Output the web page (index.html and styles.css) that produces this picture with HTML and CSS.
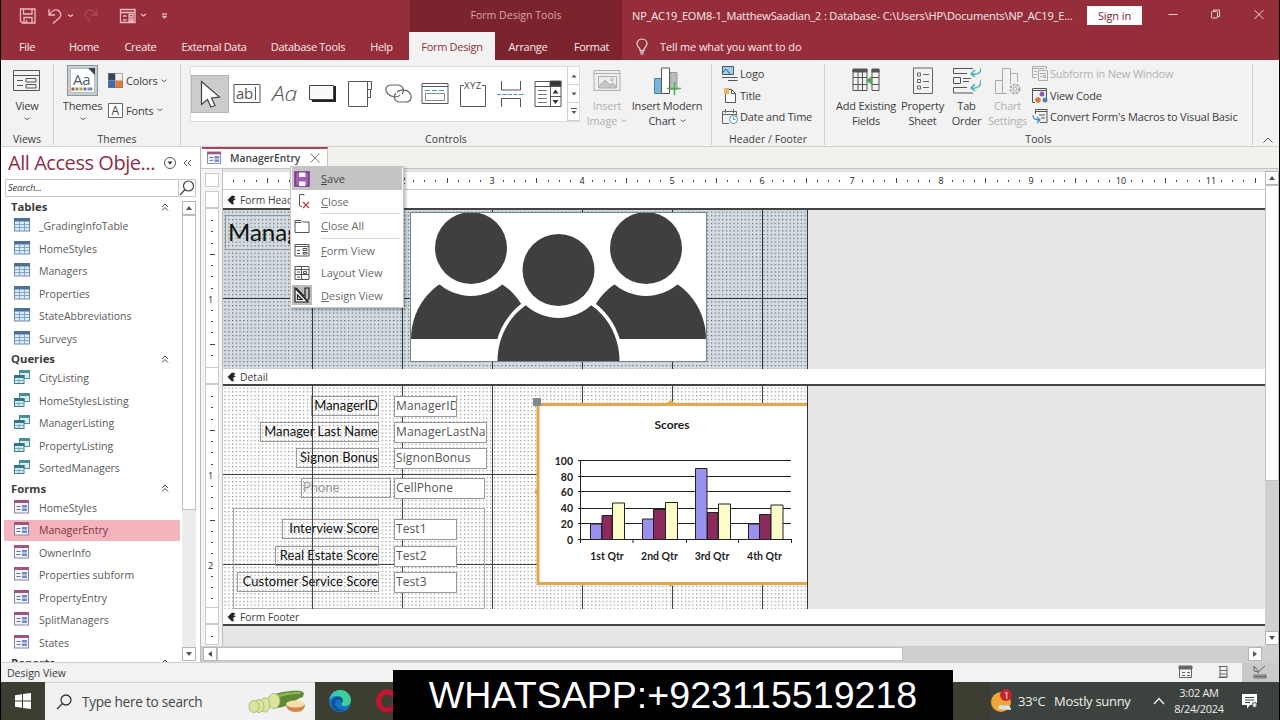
FILE: index.html
```html
<!DOCTYPE html>
<html lang="en">
<head>
  <meta charset="UTF-8">
  <meta name="viewport" content="width=device-width, initial-scale=1.0">
  <title>NP_AC19_EOM8-1_MatthewSaadian_2 : Database</title>
  <link rel="stylesheet" href="styles.css">
</head>
<body>
  <!-- shared icons -->
  <svg class="defs" width="0" height="0">
    <symbol id="i-table" viewBox="0 0 16 14">
      <rect x="0.5" y="0.5" width="15" height="12.500" fill="#dcebf8" stroke="#6c8ba8"/>
      <rect x="0" y="0" width="16" height="3.500" fill="#4d7096"/>
      <path d="M5.500 3v10M10.500 3v10M1 6.500h14M1 9.500h14" stroke="#7ea6cf" fill="none"/>
    </symbol>
    <symbol id="i-query" viewBox="0 0 16 14">
      <rect x="5.500" y="0.500" width="10" height="8" fill="#d5eeec" stroke="#4c8f92"/>
      <rect x="5" y="0" width="11" height="3" fill="#4c8f92"/>
      <rect x="0.500" y="5.500" width="9.500" height="8" fill="#d3ebf0" stroke="#3e7c8c"/>
      <rect x="0" y="5" width="10.500" height="3" fill="#357482"/>
      <path d="M5 9v4M1 10.500h8" stroke="#76aeb8"/>
    </symbol>
    <symbol id="i-form" viewBox="0 0 16 14">
      <rect x="0.500" y="0.500" width="14" height="12.500" fill="#f3f5fc" stroke="#7e86ab"/>
      <rect x="0" y="0" width="15" height="3" fill="#a0567c"/>
      <path d="M2.500 6.500h4M2.500 9.500h4" stroke="#5b6aa8"/>
      <rect x="8" y="5" width="5" height="2.500" fill="#7287c9"/>
      <rect x="8" y="8.500" width="5" height="2.500" fill="#7287c9"/>
    </symbol>
    <symbol id="i-collapse" viewBox="0 0 8 8">
      <path d="M1 4l3-3 3 3M1 7.500l3-3 3 3" fill="none" stroke="#444"/>
    </symbol>
    <symbol id="i-section" viewBox="0 0 10 10">
      <path d="M0.500 5L5 0.500 8.500 1.500 6.500 3.500 9 4 6 6 7 9.500 4.500 9z" fill="#222"/>
    </symbol>
    <symbol id="i-chev" viewBox="0 0 6 4">
      <path d="M0.500 0.700l2.500 2 2.500-2" fill="none" stroke="currentColor"/>
    </symbol>
  </svg>

  <div class="titlebar">
    <div class="quick">
      <svg width="170" height="32" viewBox="0 0 170 32" fill="none" stroke="#f0bcc2" stroke-width="1.300">
        <path d="M20.500 9h14.500v14h-12.500l-2-2zM23.500 9v5h8.500V9M24 23v-5.500h8V23M26.500 20v3"/>
        <path d="M49 9v6h6M49 15c4-6 8-6 10-4 3 3 2 6-1 8l-5 4.500"/>
        <path d="M68 14.500l2.500 2 2.500-2" />
        <path d="M97 9v6h-6M97 15c-4-6-8-6-10-4-3 3-2 6 1 8l3 3" stroke="#a94a56"/>
        <path d="M120.500 9.500h14.500v13h-14.500zM120.500 12.500h14.500M123 16h3.500M123 20h3.500M129 14.500h4v2.500h-4zM129 19h4v2h-4z"/>
        <path d="M141 14l2.500 2 2.500-2"/>
        <path d="M162 14h5"/><path d="M162 16h5l-2.500 2.500z" fill="#f0bcc2" stroke-width="0.500"/>
      </svg>
    </div>
    <div class="context-title">Form Design Tools</div>
    <div class="doc-title">NP_AC19_EOM8-1_MatthewSaadian_2 : Database- C:\Users\HP\Documents\NP_AC19_E...</div>
    <button class="signin">Sign in</button>
    <svg class="winbtns" width="130" height="32" viewBox="0 0 130 32" fill="none" stroke="#f3d5d8">
      <path d="M26.500 14.500h9"/>
      <rect x="69.500" y="11.500" width="6" height="6.500" rx="1"/><path d="M71.500 11.500v-1.500h6v6.500h-1.500"/>
      <path d="M112.500 10l9 9M121.500 10l-9 9"/>
    </svg>
  </div>

  <div class="tabs">
    <span class="tab t-file">File</span>
    <span class="tab t-home">Home</span>
    <span class="tab t-create">Create</span>
    <span class="tab t-ext">External Data</span>
    <span class="tab t-db">Database Tools</span>
    <span class="tab t-help">Help</span>
    <span class="tab t-design active">Form Design</span>
    <span class="tab t-arrange dark">Arrange</span>
    <span class="tab t-format dark">Format</span>
    <span class="tell">
      <svg width="12" height="17" viewBox="0 0 12 17" fill="none" stroke="#f6dfe1" stroke-width="1.200">
        <path d="M4 12.500V11C2.500 9.500 1 8 1 5.800 1 3 3.200 1 6 1s5 2 5 4.800C11 8 9.500 9.500 8 11v1.500zM4 14.200h4M4.500 16h3"/>
      </svg>
      <span>Tell me what you want to do</span>
    </span>
  </div>

  <div class="ribbon">
    <div class="group g-views">
      <div class="group-body">
        <div class="big">
          <svg width="28" height="28" viewBox="0 0 28 28" fill="none" stroke="#555">
            <path d="M0.500 3.500h26v20H0.500zM0.500 8.500h26"/><path d="M4 13.500h6M4 18.500h6M13 11.500h10v3.500H13zM13 17.500h10v3.500H13z"/>
          </svg>
          <span>View</span>
          <svg class="chev" width="6" height="4"><use href="#i-chev"/></svg>
        </div>
      </div>
      <div class="group-name">Views</div>
    </div>

    <div class="group g-themes">
      <div class="group-body">
        <div class="big">
          <svg width="31" height="31" viewBox="0 0 31 31">
            <rect x="0.500" y="0.500" width="30" height="30" fill="#c3cfd2" stroke="#8a9698"/>
            <path d="M3.500 3.500h18l6 6v18h-24z" fill="#fff" stroke="#b5bdbf"/>
            <path d="M21 3h7v7z" fill="#3c4650"/>
            <path d="M4.500 24h3" stroke="#b4553c" stroke-width="3"/><path d="M8.500 24h3" stroke="#68a06a" stroke-width="3"/><path d="M12.500 24h3" stroke="#cf9a3a" stroke-width="3"/><path d="M16.500 24h3" stroke="#4c7eae" stroke-width="3"/><path d="M20.500 24h5" stroke="#7f94a1" stroke-width="3"/>
            <text x="6" y="20" font-size="15" fill="#52616b">Aa</text>
          </svg>
          <span>Themes</span>
          <svg class="chev" width="6" height="4"><use href="#i-chev"/></svg>
        </div>
        <div class="small-list themes-list">
          <div class="small">
            <svg width="15" height="15" viewBox="0 0 15 15"><path d="M0 0h7.500v7.500H0z" fill="#39475a"/><path d="M7.500 0H15v7.500H7.500z" fill="#f5efe9"/><path d="M0 7.500h7.500V15H0z" fill="#3f6cb0"/><path d="M7.500 7.500H15V15H7.500z" fill="#dc7f3d"/><path d="M0.500 0.500h14v14h-14z" fill="none" stroke="#777" stroke-width="0.600"/></svg>
            <span>Colors</span>
            <svg class="chev" width="6" height="4"><use href="#i-chev"/></svg>
          </div>
          <div class="small">
            <svg width="15" height="15" viewBox="0 0 15 15"><path d="M0.500 0.500h14v14h-14z" fill="#fff" stroke="#666"/><text x="3.500" y="12" font-size="12" fill="#444">A</text></svg>
            <span>Fonts</span>
            <svg class="chev" width="6" height="4"><use href="#i-chev"/></svg>
          </div>
        </div>
      </div>
      <div class="group-name">Themes</div>
    </div>

    <div class="group g-controls">
      <div class="group-body">
        <div class="gallery">
          <div class="cell selected">
            <svg width="28" height="28" viewBox="0 0 28 28"><path d="M5.500 1.500v23l6-5 3.500 7.500 4-1.500-3.500-7.500 8-1z" fill="#fff" stroke="#444" stroke-width="1.200"/></svg>
          </div>
          <div class="cell">
            <svg width="28" height="28" viewBox="0 0 28 28"><path d="M1 4.500h26v18H1z" fill="#fff" stroke="#555"/><path d="M22.500 7v13" stroke="#555"/><text x="3" y="19" font-size="15" textLength="17" fill="#555">ab</text></svg>
          </div>
          <div class="cell">
            <svg width="28" height="28" viewBox="0 0 28 28"><text x="1" y="21" font-size="20" textLength="25" lengthAdjust="spacingAndGlyphs" font-style="italic" font-weight="300" fill="#555">Aa</text></svg>
          </div>
          <div class="cell">
            <svg width="28" height="28" viewBox="0 0 28 28"><path d="M1 6h26v16H3z" fill="#222"/><path d="M0.500 5.500h24v14h-24z" fill="#fafafa" stroke="#444"/></svg>
          </div>
          <div class="cell">
            <svg width="28" height="28" viewBox="0 0 28 28" fill="none" stroke="#555"><path d="M2.500 1.500h19v25h-19z"/><path d="M21.500 1.500h4v8h-4M21.500 9.500h3v8h-3"/></svg>
          </div>
          <div class="cell">
            <svg width="28" height="28" viewBox="0 0 28 28" fill="none" stroke="#666" stroke-width="1.200"><path d="M16 15c-2 3-9 2-12-1-4-4-2-9 3-9h6c6 0 8 5 5 9"/><path d="M13 12c3-3 10-2 12 0 4 4 2 10-3 10h-6c-6 0-7-6-4-9"/></svg>
          </div>
          <div class="cell">
            <svg width="28" height="28" viewBox="0 0 28 28" fill="none" stroke="#555"><path d="M1 3.500h26v20H1zM1 6.500h26"/><path d="M4 10.500h20" stroke="#3f9ab8" stroke-dasharray="5 2"/><path d="M4.500 13.500h19v7h-19z" stroke="#888"/></svg>
          </div>
          <div class="cell">
            <svg width="28" height="28" viewBox="0 0 28 28" fill="none"><path d="M5 5.500H1.500v21h25v-21H23" stroke="#555"/><text x="5" y="9" font-size="9.500" textLength="17" fill="#444">XYZ</text></svg>
          </div>
          <div class="cell">
            <svg width="28" height="28" viewBox="0 0 28 28" fill="none" stroke="#555"><path d="M4.500 1v9h19V1M4.500 27v-8.500h19V27"/><path d="M0 14.500h28" stroke="#3f9ab8" stroke-dasharray="4 1.500"/></svg>
          </div>
          <div class="cell">
            <svg width="28" height="28" viewBox="0 0 28 28" fill="none" stroke="#555"><path d="M1 1.500h26v25H1zM1 6.500h26M16.500 6v20M16.500 16.500H27"/><path d="M16 1h11v5H16z" fill="#333"/><path d="M4 10.500h9M4 14.500h9M4 18.500h9M4 22.500h9" stroke="#777"/><path d="M18.500 13.500l3-4 3 4zM18.500 20l3 4 3-4z" fill="#333" stroke="none"/></svg>
          </div>
          <div class="gal-scroll">
            <span><svg width="6" height="4"><path d="M0.500 3.500h5L3 0.500z" fill="#555"/></svg></span>
            <span><svg width="6" height="4"><path d="M0.500 0.500h5L3 3.500z" fill="#555"/></svg></span>
            <span><svg width="6" height="7"><path d="M0 0h6v1H0zM0.500 3h5L3 6z" fill="#555"/></svg></span>
          </div>
        </div>
        <div class="big disabled b-image">
          <svg width="28" height="28" viewBox="0 0 28 28" fill="none" stroke="#b0b0b0"><path d="M1 3.500h26v20H1z" fill="#eee"/><path d="M1 6.500h26M5.500 9.500h18v11h-18z"/><path d="M6 19l6-6 5 5 3-2 3 3v2H6z" fill="#c6c6c6"/><circle cx="19" cy="12.500" r="1.300"/></svg>
          <span>Insert</span>
          <span class="row"><span>Image</span><svg class="chev" width="6" height="4"><use href="#i-chev"/></svg></span>
        </div>
        <div class="big b-chart">
          <svg width="28" height="28" viewBox="0 0 28 28" fill="none"><path d="M1.500 11.500h8v15h-8z" fill="#79b4d8" stroke="#4683a8"/><path d="M17 5.500h7v17h-7z" fill="#bbb" stroke="#999"/><path d="M8.500 1h8v25.500h-8z" fill="#fff" stroke="#555"/><path d="M14 21.500h14M21.500 15v13" stroke="#4cae4f" stroke-width="1.500"/></svg>
          <span>Insert Modern</span>
          <span class="row"><span>Chart</span><svg class="chev" width="6" height="4"><use href="#i-chev"/></svg></span>
        </div>
      </div>
      <div class="group-name">Controls</div>
    </div>

    <div class="group g-header">
      <div class="small-list hf-list">
        <div class="small">
          <svg width="16" height="15" viewBox="0 0 16 15" fill="none" stroke="#555"><path d="M0.500 0.500h11v8h-11z" fill="#9fd0ea"/><path d="M1 6l3-3 4 5" stroke="#1d6286"/><path d="M0 11.500h15.500M6 14.500h9.500"/></svg>
          <span>Logo</span>
        </div>
        <div class="small">
          <svg width="16" height="15" viewBox="0 0 16 15" fill="none" stroke="#555"><path d="M3.500 1.500h6l4 4v9h-10z" fill="#fff"/><path d="M9.500 1.500v4h4"/><path d="M2 0h5v6H2z" fill="#e9b765" stroke="none"/></svg>
          <span>Title</span>
        </div>
        <div class="small">
          <svg width="16" height="15" viewBox="0 0 16 15" fill="none" stroke="#666"><path d="M7 14.500H0.500v-12h14v4M0.500 5.500h14M3.500 0v4M11.500 0v4"/><circle cx="11.500" cy="10.500" r="4" fill="#fff" stroke="#3b9bbd"/><path d="M11.500 8v2.500h2" stroke="#3b9bbd"/></svg>
          <span>Date and Time</span>
        </div>
      </div>
      <div class="group-name">Header / Footer</div>
    </div>

    <div class="group g-tools">
      <div class="group-body">
        <div class="big b-fields">
          <svg width="28" height="28" viewBox="0 0 28 28" fill="none" stroke="#555"><path d="M1 2.500h14v21H1zM1 10.500h14M1 17.500h14M6 2v21M10.500 2v21M20 2.500h7v21h-7zM20 10.500h7M20 17.500h7"/><path d="M1 2h14v3H1zM20 2h7v3h-7z" fill="#555"/><path d="M20 9v9l-6-4.500z" fill="#54a75a" stroke="none"/></svg>
          <span>Add Existing</span><span>Fields</span>
        </div>
        <div class="big b-prop">
          <svg width="28" height="28" viewBox="0 0 28 28" fill="none" stroke="#666"><path d="M4.500 1h19v25.500h-19z"/><path d="M8.500 6h3v3h-3zM8.500 12.500h3v3h-3zM8.500 19h3v3h-3zM14 7.500h6M14 14.500h6M14 20.500h6"/></svg>
          <span>Property</span><span>Sheet</span>
        </div>
        <div class="big b-tab">
          <svg width="28" height="28" viewBox="0 0 28 28" fill="none" stroke="#555"><path d="M20 1.500H0.500V6.500H14M0.500 10.500h7v6h-7zM10 11.500h8M10 14.500h6M14 20.500H0.500v5.500H20"/><path d="M28 1c0 5-3 7-9 6M22 3l-4 4 4 3M28 13c0 6-3 9-9 8M22 17l-4 4 4 3" stroke="#3fa9b7" stroke-width="1.300"/></svg>
          <span>Tab</span><span>Order</span>
        </div>
        <div class="big disabled b-set">
          <svg width="28" height="28" viewBox="0 0 28 28" fill="none" stroke="#aaa"><path d="M13 26.500H1.500v-13h7M8.500 26v-24.500h8V17M16.500 6.500h7V15"/><circle cx="21" cy="22" r="4.500" stroke-width="2" stroke-dasharray="2.500 1.200"/><circle cx="21" cy="22" r="2"/></svg>
          <span>Chart</span><span>Settings</span>
        </div>
        <div class="small-list tools-list">
          <div class="small disabled">
            <svg width="16" height="15" viewBox="0 0 16 15" fill="none" stroke="#aaa"><path d="M4 11.500H0.500v-11h14V3M0.500 2.500h12M2 5.500h3M2 8.500h3M6.500 4.500h9v10h-9zM8 7.500h6M8 10.500h2M11.500 9.500h2v2h-2z"/></svg>
            <span>Subform in New Window</span>
          </div>
          <div class="small">
            <svg width="16" height="15" viewBox="0 0 16 15" fill="none" stroke="#555"><path d="M3 14.500H0.500v-14h14V10M0.500 2.500h14"/><circle cx="10" cy="6" r="2.500" fill="#8e5bb0" stroke="none"/><circle cx="6" cy="12" r="2.800" fill="#d47a3a" stroke="none"/><circle cx="13" cy="12" r="2.500" fill="#4a83c0" stroke="none"/></svg>
            <span>View Code</span>
          </div>
          <div class="small">
            <svg width="16" height="15" viewBox="0 0 16 15" fill="none" stroke="#555"><path d="M3.500 5V0.500h11.500v13H8M3.500 2.500H15M7 6h6M9 9h4"/><path d="M1 6c0 3 1 5 6 5M5 8l3 3-3 3" stroke="#3a8dc0" stroke-width="1.300"/></svg>
            <span>Convert Form's Macros to Visual Basic</span>
          </div>
        </div>
      </div>
      <div class="group-name">Tools</div>
    </div>
    <div class="ribbon-end"><svg width="10" height="6" viewBox="0 0 10 6"><path d="M0.500 5.500L5 1l4.500 4.500" fill="none" stroke="#555"/></svg></div>
  </div>

  <div class="main">
    <div class="nav">
      <div class="nav-head">
        <span class="nav-title">All Access Obje...</span>
        <svg width="30" height="14" viewBox="0 0 30 14" fill="none" stroke="#555"><circle cx="7" cy="7" r="5.500"/><path d="M4.500 5.500h5L7 8.500z" fill="#333" stroke="none"/><path d="M24 4l-3 3 3 3M28 4l-3 3 3 3"/></svg>
      </div>
      <div class="search">
        <span class="search-text">Search...</span>
        <span class="search-btn"><svg width="16" height="16" viewBox="0 0 16 16" fill="none" stroke="#444" stroke-width="1.200"><circle cx="9.500" cy="6" r="5"/><path d="M6 9.500L1 15"/></svg></span>
      </div>
      <div class="nav-body">
        <div class="nav-list">
          <div class="nav-group"><span>Tables</span><svg width="8" height="8"><use href="#i-collapse"/></svg></div>
          <div class="item"><svg width="16" height="14"><use href="#i-table"/></svg><span>_GradingInfoTable</span></div>
          <div class="item"><svg width="16" height="14"><use href="#i-table"/></svg><span>HomeStyles</span></div>
          <div class="item"><svg width="16" height="14"><use href="#i-table"/></svg><span>Managers</span></div>
          <div class="item"><svg width="16" height="14"><use href="#i-table"/></svg><span>Properties</span></div>
          <div class="item"><svg width="16" height="14"><use href="#i-table"/></svg><span>StateAbbreviations</span></div>
          <div class="item"><svg width="16" height="14"><use href="#i-table"/></svg><span>Surveys</span></div>
          <div class="nav-group"><span>Queries</span><svg width="8" height="8"><use href="#i-collapse"/></svg></div>
          <div class="item"><svg width="16" height="14"><use href="#i-query"/></svg><span>CityListing</span></div>
          <div class="item"><svg width="16" height="14"><use href="#i-query"/></svg><span>HomeStylesListing</span></div>
          <div class="item"><svg width="16" height="14"><use href="#i-query"/></svg><span>ManagerListing</span></div>
          <div class="item"><svg width="16" height="14"><use href="#i-query"/></svg><span>PropertyListing</span></div>
          <div class="item"><svg width="16" height="14"><use href="#i-query"/></svg><span>SortedManagers</span></div>
          <div class="nav-group"><span>Forms</span><svg width="8" height="8"><use href="#i-collapse"/></svg></div>
          <div class="item"><svg width="16" height="14"><use href="#i-form"/></svg><span>HomeStyles</span></div>
          <div class="item current"><svg width="16" height="14"><use href="#i-form"/></svg><span>ManagerEntry</span></div>
          <div class="item"><svg width="16" height="14"><use href="#i-form"/></svg><span>OwnerInfo</span></div>
          <div class="item"><svg width="16" height="14"><use href="#i-form"/></svg><span>Properties subform</span></div>
          <div class="item"><svg width="16" height="14"><use href="#i-form"/></svg><span>PropertyEntry</span></div>
          <div class="item"><svg width="16" height="14"><use href="#i-form"/></svg><span>SplitManagers</span></div>
          <div class="item"><svg width="16" height="14"><use href="#i-form"/></svg><span>States</span></div>
          <div class="nav-group"><span>Reports</span><svg width="8" height="8"><use href="#i-collapse"/></svg></div>
        </div>
        <div class="nav-scroll">
          <div class="sbtn"><svg width="6" height="4"><path d="M0 4h6L3 0z" fill="#555"/></svg></div>
          <div class="thumb"></div>
          <div class="sbtn"><svg width="6" height="4"><path d="M0 0h6L3 4z" fill="#555"/></svg></div>
        </div>
      </div>
    </div>

    <div class="doc">
      <div class="doc-tabs">
        <div class="doc-tab">
          <svg width="15" height="14" viewBox="0 0 16 14"><use href="#i-form"/></svg>
          <span>ManagerEntry</span>
          <svg width="10" height="10" viewBox="0 0 10 10"><path d="M0.500 0.500l9 9M9.500 0.500l-9 9" stroke="#777"/></svg>
        </div>
      </div>
      <div class="design">
        <div class="left-ruler">
          <div class="corner"></div>
          <svg id="vruler" width="20" height="456"></svg>
        </div>
        <div class="sheet">
          <svg id="hruler" width="1042" height="18"></svg>
          <div class="bar first"><svg width="10" height="10"><use href="#i-section"/></svg><span>Form Header</span></div>
          <div class="section head-sec">
            <svg class="grid" width="585" height="159">
              <defs><pattern id="dots" width="3.742" height="3.742" patternUnits="userSpaceOnUse" x="1.500" y="1.500"><rect width="1.200" height="1.200" fill="#55656d"/></pattern></defs>
              <rect width="585" height="159" fill="#d3dde1"/>
              <rect width="585" height="159" fill="url(#dots)"/>
              <path d="M89.500 0v159M179.500 0v159M269.500 0v159M359.500 0v159M449.500 0v159M539.500 0v159M0 88.500h585" stroke="#2d3338"/>
            </svg>
            <div class="form-title">Manager</div>
            <svg class="people" width="297" height="150" viewBox="0 0 297 150">
              <rect x="0.500" y="0.500" width="296" height="149" fill="#fff"/>
              <g fill="#3f3f3f">
                <path d="M1 127a60 64 0 0 1 120 0z"/><path d="M176 127a60 64 0 0 1 120 0z"/>
              </g>
              <circle cx="61" cy="36" r="48" fill="#fff"/><circle cx="236" cy="36" r="48" fill="#fff"/>
              <circle cx="61" cy="36" r="36" fill="#3f3f3f"/><circle cx="236" cy="36" r="36" fill="#3f3f3f"/>
              <path d="M84 149a64.500 70 0 0 1 129 0z" fill="#fff"/>
              <path d="M87.500 149a61 66 0 0 1 122 0z" fill="#3f3f3f"/>
              <circle cx="148.500" cy="58" r="48" fill="#fff"/>
              <circle cx="148.500" cy="58" r="36" fill="#3f3f3f"/>
              <rect x="0.500" y="0.500" width="296" height="149" fill="none" stroke="#7d8589"/>
            </svg>
          </div>
          <div class="bar"><svg width="10" height="10"><use href="#i-section"/></svg><span>Detail</span></div>
          <div class="section detail-sec">
            <svg class="grid" width="585" height="223">
              <defs><pattern id="dots2" width="3.742" height="3.742" patternUnits="userSpaceOnUse" x="1.500" y="1.500"><rect width="1.200" height="1.200" fill="#888"/></pattern></defs>
              <rect width="585" height="223" fill="#fff"/>
              <rect width="585" height="223" fill="url(#dots2)"/>
              <path d="M89.500 0v223M179.500 0v223M269.500 0v223M359.500 0v223M449.500 0v223M539.500 0v223M0 88.500h585M0 178.500h585" stroke="#444"/>
            </svg>
            <div class="scores-box"></div>
            <div class="lbl a1">ManagerID</div><div class="fld f1">ManagerID</div>
            <div class="lbl a2">Manager Last Name</div><div class="fld f2">ManagerLastNa</div>
            <div class="lbl a3">Signon Bonus</div><div class="fld f3">SignonBonus</div>
            <div class="lbl a4">Phone</div><div class="fld f4">CellPhone</div>
            <div class="lbl a5">Interview Score</div><div class="fld f5">Test1</div>
            <div class="lbl a6">Real Estate Score</div><div class="fld f6">Test2</div>
            <div class="lbl a7">Customer Service Score</div><div class="fld f7">Test3</div>
            <svg class="guide" width="1" height="223"><path d="M0.500 0v223" stroke="#444"/></svg>
            <svg class="chart" width="275" height="188" viewBox="533 398 275 188">
              <path d="M807 404.500H538v179h269" fill="#fff" stroke="#e2a850" stroke-width="3"/>
              <path d="M671 400l4 3h-8zM671 587l4-3h-8zM534 492l4-4v8z" fill="#e2a850"/>
              <rect x="532" y="398" width="9" height="8" fill="#7f8a90"/>
              <path d="M578 460.500h213M578 476.500h213M578 491.500h213M578 508.500h213M578 523.500h213M578 539.500h213M580.500 460v83M633 540v3M686.500 540v3M738.500 540v3M791.500 539v4" stroke="#222" fill="none"/>
              <g stroke="#222">
                <g fill="#9a91ee"><path d="M590.500 524h11v15.500h-11z"/><path d="M642.500 519h11v20.500h-11z"/><path d="M695.500 468.500h11.500v71h-11.500z"/><path d="M748.500 524h11v15.500h-11z"/></g>
                <g fill="#8c2a5e"><path d="M602 515.500h10v24h-10z"/><path d="M653.500 509.500h12v30h-12z"/><path d="M707.500 512.500h10.500v27h-10.500z"/><path d="M759.500 514.500h11v25h-11z"/></g>
                <g fill="#fcfcc8"><path d="M612.500 503h12v36.500h-12z"/><path d="M665.500 502.500h12v37h-12z"/><path d="M718.500 504h12v35.500h-12z"/><path d="M771 505h12v34.500h-12z"/></g>
              </g>
              <g class="chart-text" text-anchor="end">
                <text x="573" y="465">100</text><text x="573" y="481">80</text><text x="573" y="496">60</text><text x="573" y="512">40</text><text x="573" y="528">20</text><text x="573" y="544">0</text>
              </g>
              <g class="chart-text" text-anchor="middle">
                <text class="chart-title" x="672" y="428.500">Scores</text>
                <text x="607" y="560">1st Qtr</text><text x="659.500" y="560">2nd Qtr</text><text x="712" y="560">3rd Qtr</text><text x="764.500" y="560">4th Qtr</text>
              </g>
            </svg>
          </div>
          <div class="bar"><svg width="10" height="10"><use href="#i-section"/></svg><span>Form Footer</span></div>
          <div class="section foot-sec"></div>
        </div>
        <div class="vscroll">
          <div class="sbtn"><svg width="6" height="4"><path d="M0 4h6L3 0z" fill="#555"/></svg></div>
          <div class="thumb"></div>
          <div class="sbtn"><svg width="6" height="4"><path d="M0 0h6L3 4z" fill="#555"/></svg></div>
        </div>
      </div>
      <div class="hscroll">
        <div class="sbtn"><svg width="4" height="6"><path d="M4 0v6L0 3z" fill="#555"/></svg></div>
        <div class="thumb"></div>
        <div class="sbtn last"><svg width="4" height="6"><path d="M0 0v6l4-3z" fill="#555"/></svg></div>
      </div>

      <div class="menu">
        <div class="mi hot"><span class="mic"><svg width="16" height="16" viewBox="0 0 16 16"><path d="M1 1h14v14H1z" fill="#a65bb4" stroke="#7d2f8c" stroke-width="1.500"/><path d="M5 1.500h6.500V6H5zM5 10.500h6.500V15H5z" fill="#fff"/></svg></span><span><u>S</u>ave</span></div>
        <div class="mi"><span class="mic"><svg width="16" height="16" viewBox="0 0 16 16" fill="none" stroke="#555"><path d="M10 2.500V1.500H5.500v11L8 14M5.500 3v9"/><path d="M9 9l6 6M15 9l-6 6" stroke="#c4434e" stroke-width="1.400"/></svg></span><span><u>C</u>lose</span></div>
        <hr>
        <div class="mi"><span class="mic"><svg width="16" height="16" viewBox="0 0 16 16" fill="none" stroke="#555"><path d="M1 3.500V2.500h6l1.500 1.500H15v10.500H1zM1 4.500h6"/></svg></span><span><u>C</u>lose All</span></div>
        <hr>
        <div class="mi"><span class="mic"><svg width="16" height="16" viewBox="0 0 16 16" fill="none" stroke="#555"><path d="M1 2.500h14v11.500H1zM1 4.500h14M3 8.500h3M3 11.500h3M9 6.500h4v2H9zM9 10.500h4v1.500H9z"/></svg></span><span><u>F</u>orm View</span></div>
        <div class="mi"><span class="mic"><svg width="16" height="16" viewBox="0 0 16 16" fill="none" stroke="#555"><path d="M1 1.500h14v13H1zM1 4.500h14M7.500 1v13M1 9.500h14M3 7h3M3 12h3M9.500 6.500h3v2h-3z"/></svg></span><span>La<u>y</u>out View</span></div>
        <div class="mi"><span class="mic on"><svg width="16" height="16" viewBox="0 0 16 16" fill="none" stroke="#222" stroke-width="1.200"><path d="M1 1v14h13zM3.500 8v4.500H8z" fill="#eee"/><path d="M2 1l8 8M11 1h4v10l-2 3-2-3z"/></svg></span><span><u>D</u>esign View</span></div>
      </div>
    </div>
  </div>

  <div class="status">
    <span>Design View</span>
    <svg width="116" height="20" viewBox="0 0 116 20" fill="none" stroke="#666">
      <rect x="79" y="0" width="37" height="20" fill="#c7cac9" stroke="none"/>
      <path d="M16.500 3.500h12v11h-12zM19 9.500h3M19 12.500h3M24 9.500h3M24 12.500h3"/><path d="M16 3h13v3H16z" fill="#666"/>
      <path d="M55.500 3.500h9M55.500 14.500h9M57 4v10h7V4M57 7.500h7M57 11h7"/>
      <path d="M91 3l5 6-5-1zM92 13.500h11M94 10l8-7M91 12h12v3H91z"/>
    </svg>
  </div>

  <div class="taskbar">
    <div class="start"><svg width="16" height="16" viewBox="0 0 16 16" fill="#fff"><path d="M0 2.200l7-1V7.500H0zM8 1l8-1v7.500H8zM0 8.500h7v6.300l-7-1zM8 8.500h8V16l-8-1z"/></svg></div>
    <div class="tsearch">
      <svg width="16" height="16" viewBox="0 0 16 16" fill="none" stroke="#333" stroke-width="1.300"><circle cx="10" cy="6" r="5"/><path d="M6.500 9.500L1 15"/></svg>
      <span>Type here to search</span>
      <svg class="veg" width="60" height="28" viewBox="0 0 60 28">
        <path d="M22 9C30 4 44 2 54 3l3 2-1 4C48 11 42 19 30 20z" fill="#5e8a35"/>
        <path d="M28 8c8-4 18-4 26-4l-1 2c-8 0-16 1-24 5z" fill="#8db552"/>
        <g fill="#dbe5a0" stroke="#9bb560" stroke-width="0.800"><ellipse cx="27" cy="13" rx="6" ry="7.500"/><ellipse cx="18" cy="17" rx="5" ry="7"/><ellipse cx="12" cy="18" rx="5" ry="6.500"/><ellipse cx="7" cy="18.500" rx="5" ry="6"/></g>
        <path d="M39 16h19c0 5-3 8-9 8s-10-3-10-8z" fill="#cf8a46"/><ellipse cx="48.500" cy="16" rx="9.500" ry="3.500" fill="#f5e0ab"/>
      </svg>
    </div>
    <div class="apps">
      <svg width="24" height="24" viewBox="0 0 24 24">
        <circle cx="12" cy="12" r="11" fill="#1673c4"/>
        <path d="M1.500 10C3 3.500 8 1 12 1c6.500 0 11 5 11 10 0 4-3 6-6 6-4 0-4-2-3-3 2-4-1-7-4-7-4 0-7 1-8.500 3z" fill="#3fcf9b"/>
        <path d="M1.500 10C4 3 10 2 14 3c-4 0-8 2-10 6z" fill="#38b3e4"/>
        <path d="M14 14c-2-6-7-4-7 0 0 5 5 8 10 6-3 3-8 3-11 0-4-4-3-12 4-12 4 0 6 3 4 6z" fill="#0f4f94"/>
      </svg>
      <svg width="24" height="24" viewBox="0 0 24 24"><ellipse cx="12" cy="12" rx="8.500" ry="9" fill="none" stroke="#c51230" stroke-width="5"/></svg>
    </div>
    <div class="tray">
      <svg width="24" height="24" viewBox="0 0 24 24"><circle cx="11" cy="13" r="10" fill="#f0a536"/><path d="M8 20c0-4 4-5 6-3 3-2 7 0 7 4z" fill="#d9e4f2"/><circle cx="16" cy="6" r="6" fill="#c2262d"/><text x="14" y="9.500" font-size="9" fill="#fff">1</text></svg>
      <span class="temp">33°C</span>
      <span class="sunny">Mostly sunny</span>
      <svg class="up" width="12" height="8" viewBox="0 0 12 8"><path d="M1 7l5-5.500L11 7" fill="none" stroke="#eee" stroke-width="1.400"/></svg>
      <div class="clock"><span>3:02 AM</span><span>8/24/2024</span></div>
      <svg class="note" width="16" height="16" viewBox="0 0 16 16"><path d="M0 1h15v11H8l-3 3.500V12H0z" fill="#fff"/><path d="M3 4.500h9M3 7h9M3 9.500h5" stroke="#41453c"/><circle cx="12.500" cy="12" r="2.500" fill="#ddd" stroke="#41453c"/></svg>
    </div>
  </div>

  <div class="banner">WHATSAPP:+923115519218</div>

  <script>
    const INCH = 89.8;
    const NS = "http://www.w3.org/2000/svg";

    function add(svg, name, attrs, text) {
      const el = document.createElementNS(NS, name);
      for (const key in attrs) el.setAttribute(key, attrs[key]);
      if (text) el.textContent = text;
      svg.appendChild(el);
    }

    // horizontal ruler, eight marks to the inch
    const h = document.getElementById("hruler");
    for (let i = 1; i < 93; i++) {
      const x = Math.round(i * INCH / 8);
      if (i % 8 === 0) add(h, "text", { x: x, y: 12, "text-anchor": "middle" }, String(i / 8));
      else if (i % 8 === 4) add(h, "rect", { x: x - 1, y: 6, width: 1, height: 5 });
      else add(h, "rect", { x: x - 1, y: 8, width: 1, height: 2 });
    }

    // vertical ruler restarts in every section
    const v = document.getElementById("vruler");
    function vertical(top, height) {
      add(v, "rect", { x: 4.5, y: top - 17.5, width: 13, height: 16, class: "box" });
      add(v, "rect", { x: 4.5, y: top - 0.5, width: 13, height: height, class: "strip" });
      for (let i = 1; i * INCH / 8 < height - 2; i++) {
        const y = Math.round(top + i * INCH / 8);
        if (i % 8 === 0) add(v, "text", { x: 7, y: y + 4 }, String(i / 8));
        else if (i % 8 === 4) add(v, "rect", { x: 9, y: y, width: 5, height: 1 });
        else add(v, "rect", { x: 10, y: y, width: 2, height: 1 });
      }
    }
    vertical(19, 159);
    vertical(195, 223);
    vertical(435, 20);
  </script>
</body>
</html>
```
FILE: styles.css
```css
* {
  box-sizing: border-box;
}
body {
  margin: 0;
  width: 1280px;
  height: 720px;
  overflow: hidden;
  display: flex;
  flex-direction: column;
  position: relative;
  border-left: 1px solid #000;
  border-right: 1px solid #000;
  background-color: #f2f2f2;
  font-family: "Open Sans", "Noto Sans", sans-serif;
  font-size: 11px;
  color: #3c3c3c;
  white-space: nowrap;
}
.defs {
  position: absolute;
}
svg {
  flex: none;
  display: block;
}

/* title bar */
.titlebar {
  height: 32px;
  display: flex;
  align-items: center;
  background-color: #962d3a;
  color: #f6dfe1;
}
.quick {
  width: 409px;
}
.quick svg {
  margin-left: -1px;
}
.context-title {
  width: 212px;
  height: 32px;
  line-height: 31px;
  text-align: center;
  background-color: #7b242e;
  color: #dba3a9;
  letter-spacing: 0.02px;
  font-size: 10.5px;
}
.doc-title {
  width: 465px;
  padding: 0 0 2px 10px;
  font-size: 11px;
  letter-spacing: -0.14px;
  color: #fbeced;
}
.signin {
  width: 55px;
  height: 19px;
  margin: 0 0 2px 0;
  padding: 0;
  border: none;
  background: #fff;
  color: #7b242e;
  font: 11px "Open Sans", sans-serif;
  letter-spacing: -0.1px;
}

/* tabs */
.tabs {
  height: 28px;
  display: flex;
  background-color: #962d3a;
  color: #fbeced;
  line-height: 29px;
}
.tab {
  text-align: center;
  letter-spacing: -0.3px;
}
.t-file { width: 52px; }
.t-home { width: 62px; }
.t-create { width: 51px; }
.t-ext { width: 96px; }
.t-db { width: 92px; }
.t-help { width: 55px; }
.t-design { width: 86px; }
.t-arrange { width: 66px; }
.t-format { width: 61px; }
.active {
  background-color: #f2f2f2;
  color: #8e3040;
}
.dark {
  background-color: #7b242e;
}
.tell {
  display: flex;
  align-items: center;
  gap: 12px;
  padding-left: 14px;
  letter-spacing: -0.12px;
}

/* ribbon */
.ribbon {
  height: 87px;
  display: flex;
  padding-top: 4px;
  border-bottom: 1px solid #d2d2d2;
  letter-spacing: -0.2px;
}
.group {
  height: 81px;
  display: flex;
  flex-direction: column;
  justify-content: space-between;
  border-right: 1px solid #cfcfcf;
}
.group-body {
  display: flex;
  height: 65px;
}
.group-name {
  height: 12px;
  line-height: 12px;
  text-align: center;
  font-size: 10.5px;
  letter-spacing: 0.05px;
}
.g-views { width: 53px; }
.g-themes { width: 127px; }
.g-controls { width: 531px; }
.g-header { width: 113px; }
.g-tools { width: 428px; }
.big {
  display: flex;
  flex-direction: column;
  align-items: center;
  line-height: 15px;
  padding-top: 3px;
}
.big > svg:first-child {
  height: 28px;
  margin-bottom: 3px;
}
.g-views .big {
  width: 52px;
}
.g-themes .big {
  width: 57px;
  padding-top: 1px;
}
.g-themes .big > svg:first-child {
  height: 31px;
  margin-bottom: 2px;
}
.chev {
  color: #666;
}
.big > .chev {
  margin-top: 4px;
}
.row {
  display: flex;
  align-items: center;
  gap: 4px;
}
.disabled,
.disabled .chev {
  color: #b1b1b1;
}
.small-list {
  display: flex;
  flex-direction: column;
}
.small {
  display: flex;
  align-items: center;
  gap: 3px;
  height: 21.5px;
}
.themes-list {
  gap: 8px;
  padding-top: 6px;
  margin-left: -3px;
}
.themes-list .chev {
  margin-left: 1px;
}
.gallery {
  width: 390px;
  height: 56px;
  margin: 2px 0 0 9px;
  display: flex;
  align-items: center;
  background-color: #fff;
  border: 1px solid #dcdcdc;
}
.cell {
  width: 37.6px;
  height: 38px;
  display: flex;
  align-items: center;
  justify-content: center;
}
.selected {
  background-color: #cacdca;
  border: 1px solid #b4b6b4;
}
.gal-scroll {
  margin-left: auto;
  width: 12px;
  height: 54px;
  display: grid;
  grid-template-rows: 1fr 1fr 1fr;
  border-left: 1px solid #d0d0d0;
}
.gal-scroll span {
  display: flex;
  align-items: center;
  justify-content: center;
  border-bottom: 1px solid #d0d0d0;
}
.b-image {
  width: 54px;
}
.b-chart {
  width: 66px;
}
.hf-list {
  height: 65px;
  margin-top: -1px;
  padding: 0 0 0 10px;
}
.hf-list .small {
  gap: 2px;
}
.g-tools .group-body {
  padding-left: 8px;
}
.b-fields { width: 66px; }
.b-prop { width: 47px; }
.b-tab { width: 41px; }
.b-set { width: 41px; }
.tools-list {
  margin: -1px 0 0 4px;
}
.tools-list .small {
  gap: 2px;
  letter-spacing: -0.18px;
}
.ribbon-end {
  flex: 1;
  display: flex;
  align-items: flex-end;
  justify-content: center;
  padding: 0 0 3px 3px;
}

/* main area */
.main {
  height: 515px;
  display: flex;
}
.nav {
  width: 200px;
  background-color: #fff;
  display: flex;
  flex-direction: column;
  border-right: 1px solid #bbb;
}
.nav-head {
  height: 32px;
  display: flex;
  align-items: center;
  padding: 0 0 1px 7px;
}
.nav-title {
  width: 155px;
  font-size: 20px;
  letter-spacing: -0.45px;
  color: #8e3048;
}
.search {
  width: 191px;
  height: 18px;
  margin-left: 4px;
  display: flex;
  justify-content: space-between;
  border: 1px solid #c9c9c9;
}
.search-text {
  font-style: italic;
  font-size: 9.5px;
  letter-spacing: -0.2px;
  line-height: 15px;
  padding-left: 2px;
}
.search-btn {
  width: 17px;
  border-left: 1px solid #c9c9c9;
}
.nav-body {
  height: 465px;
  display: flex;
  overflow: hidden;
}
.nav-list {
  width: 181px;
  padding: 1px 2px 0 3px;
}
.nav-group {
  height: 17px;
  display: flex;
  align-items: center;
  justify-content: space-between;
  padding: 0 11px 0 7px;
  font-weight: bold;
  font-size: 11.3px;
}
.item {
  height: 22.5px;
  display: flex;
  align-items: center;
  gap: 9px;
  padding-left: 10px;
  font-size: 10.5px;
  color: #5a5a5a;
}
.item svg {
  margin-bottom: 2px;
}
.current {
  background-color: #f4b4bd;
  color: #7a3440;
  height: 20.5px;
  margin: 1px 0;
}
.nav-scroll {
  width: 14px;
  margin-top: 4px;
  height: 460px;
  display: flex;
  flex-direction: column;
  background-color: #ececec;
}
.sbtn {
  width: 14px;
  height: 14px;
  flex: none;
  display: flex;
  align-items: center;
  justify-content: center;
  background-color: #fff;
  border: 1px solid #b5b5b5;
}
.thumb {
  background-color: #fff;
  border: 1px solid #c0c0c0;
}
.nav-scroll .thumb {
  height: 295px;
}
.nav-scroll .sbtn:last-child {
  margin-top: auto;
}

/* document */
.doc {
  width: 1078px;
  display: flex;
  flex-direction: column;
  position: relative;
}
.doc-tabs {
  height: 22px;
  background-color: #f1f2ed;
  border-bottom: 1px solid #c4c4c0;
}
.doc-tab {
  width: 126px;
  height: 21px;
  margin-left: 1px;
  display: flex;
  align-items: center;
  padding: 0 0 1px 5px;
  background-color: #fff;
  border-top: 2px solid #a8435a;
  border-right: 1px solid #c4c4c0;
  font-size: 10.3px;
  font-weight: 600;
  color: #444;
}
.doc-tab span {
  width: 72px;
  margin: 0 8px 0 8px;
}
.design {
  height: 477px;
  display: flex;
  background-color: #e6e6e6;
}
.left-ruler {
  width: 22px;
  background-color: #f4f4f4;
  border-right: 1px solid #bdbdbd;
}
.corner {
  width: 14px;
  height: 14px;
  margin: 4px 0 3px 4px;
  background-color: #fff;
  border: 1px solid #ccc;
}
#hruler {
  margin-top: 2px;
  background-color: #fff;
  border-top: 1px solid #ddd;
}
#hruler text,
#vruler text {
  font-size: 9px;
  fill: #222;
}
#hruler rect,
#vruler rect {
  fill: #444;
}
#vruler .box,
#vruler .strip {
  fill: #fff;
  stroke: #ccc;
}
.sheet {
  width: 1042px;
  display: flex;
  flex-direction: column;
}
.bar {
  height: 17px;
  display: flex;
  align-items: center;
  gap: 3px;
  padding-left: 4px;
  background-color: #fff;
  border-bottom: 2px solid #444;
  font-size: 10.3px;
}
.bar.first {
  height: 21px;
  padding-top: 2px;
  border-top: 1px solid #ccc;
}
.section {
  position: relative;
}
.head-sec {
  height: 159px;
}
.grid {
  border-right: 1px solid #333;
}
.detail-sec {
  height: 223px;
}
.foot-sec {
  height: 20px;
}
.form-title {
  position: absolute;
  left: 2px;
  top: 5px;
  width: 120px;
  height: 35px;
  line-height: 32px;
  padding-left: 2px;
  font-family: Lato, sans-serif;
  font-size: 24px;
  color: #111;
  border: 1px solid #8c969b;
}
.people {
  position: absolute;
  left: 187px;
  top: 2px;
}

/* bound controls on the detail section */
.lbl,
.fld {
  position: absolute;
  height: 21px;
  line-height: 18px;
  margin-top: -1px;
  border: 1px solid #999;
  font-size: 13px;
  overflow: hidden;
}
.lbl {
  height: 20px;
  line-height: 16px;
  text-align: right;
  font-family: Lato, sans-serif;
  color: #111;
}
.fld {
  left: 171px;
  padding-left: 1px;
  background-color: #fff;
  font-size: 12px;
  letter-spacing: 0.1px;
  color: #555;
}
.a1 { left: 88px; top: 11px; width: 68px; }
.a2 { left: 37px; top: 37px; width: 119px; }
.a3 { left: 73px; top: 63px; width: 83px; }
.a4 { left: 78px; top: 93px; width: 90px; text-align: left; color: #999; padding-left: 1px; }
.a5 { left: 59px; top: 134px; width: 97px; }
.a6 { left: 52px; top: 161px; width: 104px; }
.a7 { left: 14px; top: 187px; width: 142px; }
.f1 { top: 11px; width: 63px; }
.f2 { top: 37px; width: 93px; }
.f3 { top: 63px; width: 93px; }
.f4 { top: 93px; width: 91px; }
.f5 { top: 134px; width: 63px; }
.f6 { top: 161px; width: 63px; }
.f7 { top: 187px; width: 63px; }
.scores-box {
  position: absolute;
  left: 10px;
  top: 122px;
  width: 252px;
  height: 101px;
  border: 1px solid #aaa;
}
.guide {
  position: absolute;
  left: 89px;
  top: 0;
}
.chart {
  position: absolute;
  left: 310px;
  top: 12px;
}
.chart-text {
  font-family: Lato, sans-serif;
  font-weight: bold;
  font-size: 10.5px;
  fill: #222;
}
.chart-title {
  font-size: 12px;
}

/* scroll bars */
.vscroll {
  width: 14px;
  margin-top: 2px;
  display: flex;
  flex-direction: column;
  background-color: #d0d0d0;
}
.vscroll .thumb {
  height: 296px;
}
.vscroll .sbtn:last-child {
  margin: auto 0 1px;
}
.hscroll {
  height: 16px;
  display: flex;
  align-items: center;
  background-color: #cfcfcf;
}
.hscroll .sbtn {
  margin-left: 2px;
}
.hscroll .thumb {
  width: 686px;
  height: 14px;
}
.hscroll .last {
  margin-left: 345px;
}

/* tab context menu */
.menu {
  position: absolute;
  left: 89px;
  top: 19px;
  width: 114px;
  height: 142px;
  padding: 0 1px;
  background-color: #fff;
  border: 1px solid #c6c6c6;
  box-shadow: 2px 2px 3px rgba(0, 0, 0, 0.25);
}
.mi {
  height: 22.5px;
  display: flex;
  align-items: center;
  gap: 9px;
  color: #6a6a6a;
}
.mic {
  width: 20px;
  height: 20px;
  display: flex;
  align-items: center;
  justify-content: center;
}
.mic.on {
  background-color: #bbb;
}
.hot {
  height: 23px;
  background-color: #c4c4c4;
  color: #444;
}
.menu hr {
  height: 1px;
  margin: 0.5px 2px 0.5px 29px;
  border: none;
  background-color: #d8d8d8;
}

/* status bar */
.status {
  height: 20px;
  display: flex;
  justify-content: space-between;
  align-items: center;
  padding-left: 6px;
  background-color: #f2f2f2;
  border-top: 1px solid #d0d0d0;
  font-size: 10.5px;
}

/* windows taskbar */
.taskbar {
  height: 38px;
  display: flex;
  background-color: #3c3e32;
  color: #eee;
}
.start {
  width: 44px;
  display: flex;
  align-items: center;
  justify-content: center;
}
.tsearch {
  width: 270px;
  display: flex;
  align-items: center;
  gap: 10px;
  padding-left: 11px;
  background-color: #f1f1f1;
  border-top: 1px solid #ccc;
  font-size: 13.6px;
  color: #444;
}
.tsearch span {
  width: 155px;
  letter-spacing: -0.25px;
}
.apps {
  width: 120px;
  display: flex;
  align-items: center;
  gap: 23px;
  padding-left: 13px;
}
.tray {
  margin-left: auto;
  width: 289px;
  display: flex;
  align-items: center;
  background-color: #3c423e;
}
.temp {
  width: 36px;
  margin-left: 4px;
  font-size: 13px;
  letter-spacing: -0.3px;
}
.sunny {
  width: 99px;
  font-size: 13px;
  letter-spacing: -0.3px;
}
.clock {
  width: 68px;
  display: flex;
  flex-direction: column;
  align-items: center;
  line-height: 16px;
  letter-spacing: -0.3px;
}
.note {
  margin-left: 9px;
}
.banner {
  position: absolute;
  left: 392px;
  top: 670px;
  width: 560px;
  height: 50px;
  line-height: 51px;
  text-align: center;
  background-color: #000;
  color: #fff;
  font-family: "Liberation Sans", sans-serif;
  font-size: 37.6px;
}
```
